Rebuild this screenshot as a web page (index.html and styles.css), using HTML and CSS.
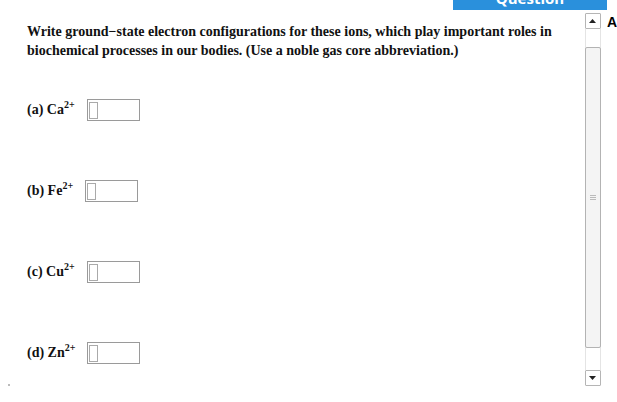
FILE: index.html
```html
<!DOCTYPE html>
<html>
<head>
<meta charset="utf-8">
<link rel="stylesheet" href="styles.css">
</head>
<body>
<div class="page">
  <div class="topbar"><div class="tab"><span class="tab-text">Question</span></div></div>
  <div class="main">
    <div class="content">
      <p class="question">Write ground&minus;state electron configurations for these ions, which play important roles in biochemical processes in our bodies. (Use a noble gas core abbreviation.)</p>
      <div class="rows">
        <div class="row"><span class="label">(a) Ca<sup>2+</sup></span><span class="box"><span class="caret"></span></span></div>
        <div class="row"><span class="label">(b) Fe<sup>2+</sup></span><span class="box"><span class="caret"></span></span></div>
        <div class="row"><span class="label">(c) Cu<sup>2+</sup></span><span class="box"><span class="caret"></span></span></div>
        <div class="row"><span class="label">(d) Zn<sup>2+</sup></span><span class="box"><span class="caret"></span></span></div>
      </div>
      <div class="dot"></div>
    </div>
    <div class="scroll">
      <div class="sbtn up"><svg width="7" height="4" viewBox="0 0 7 4"><polygon points="0,4 7,4 3.5,0" fill="#222"/></svg></div>
      <div class="track">
        <div class="thumb"><div class="grip"></div></div>
      </div>
      <div class="sbtn down"><svg width="7" height="4" viewBox="0 0 7 4"><polygon points="0,0 7,0 3.5,4" fill="#222"/></svg></div>
    </div>
    <div class="edge">A</div>
  </div>
</div>
</body>
</html>
```
FILE: styles.css
```css
html, body { margin: 0; padding: 0; background: #fff; }
.page { width: 617px; height: 402px; overflow: hidden; display: flex; flex-direction: column; }
.topbar { height: 10px; display: flex; justify-content: flex-end; padding-right: 10px; }
.tab { width: 154px; height: 10px; background: #2a90dc; overflow: hidden; text-align: center; }
.tab-text { display: block; margin-top: -9px; font: bold 15px/14px "Open Sans", "Liberation Sans", sans-serif; color: #fff; }
.main { display: flex; flex: 1; }
.content { width: 564px; padding-left: 27px; padding-top: 12px; font-family: "Liberation Serif", serif; font-weight: bold; font-size: 14px; color: #111; }
.question { margin: 0; line-height: 19px; width: 540px; }
.rows { margin-top: 39px; display: flex; flex-direction: column; gap: 59px; }
.row { display: flex; align-items: center; gap: 12px; height: 22px; }
.label { line-height: 22px; }
.label sup { font-size: 10px; line-height: 0; vertical-align: 6px; }
.box { width: 50px; height: 20px; border: 1px solid #9a9a9a; display: flex; align-items: center; padding-left: 1px; box-sizing: content-box; }
.caret { width: 7px; height: 15px; border: 1px solid #aaa; margin-left: 0; }
.dot { width: 2px; height: 2px; background: #bbb; margin-left: -19px; margin-top: 20px; }
.scroll { width: 16px; margin-top: 3px; height: 373px; display: flex; flex-direction: column; }
.sbtn { border: 1px solid #b5b5b5; background: #fff; display: flex; align-items: center; justify-content: center; box-sizing: border-box; height: 16px; border-radius: 1px; }
.track { flex: 1; background: #fff; border-left: 1px solid #e4e4e4; border-right: 1px solid #e4e4e4; padding: 18px 0 22px 0; display: flex; }
.thumb { flex: 1; background: #f4f4f4; border: 1px solid #b3b3b3; border-radius: 2px; display: flex; align-items: center; justify-content: center; margin: 0 -1px; }
.grip { width: 6px; height: 5px; background: repeating-linear-gradient(#bbb 0 1px, transparent 1px 2px); }
.edge { padding-left: 6px; padding-top: 4px; font: bold 14px/16px "Liberation Sans", sans-serif; color: #000; }
```
